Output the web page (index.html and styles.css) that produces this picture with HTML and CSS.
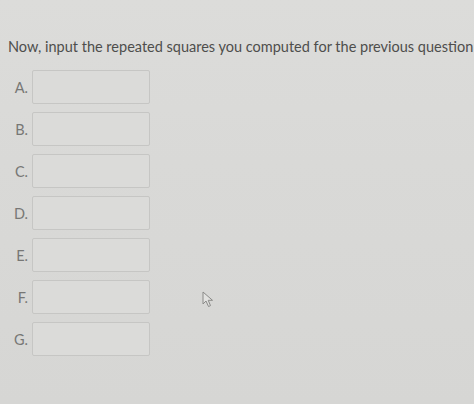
FILE: index.html
```html
<!DOCTYPE html>
<html>
<head>
<meta charset="utf-8">
<link rel="stylesheet" href="styles.css">
</head>
<body>
<div class="page">
  <p class="question">Now, input the repeated squares you computed for the previous question</p>
  <div class="answers">
    <div class="row"><span class="label">A.</span><div class="box"></div></div>
    <div class="row"><span class="label">B.</span><div class="box"></div></div>
    <div class="row"><span class="label">C.</span><div class="box"></div></div>
    <div class="row"><span class="label">D.</span><div class="box"></div></div>
    <div class="row"><span class="label">E.</span><div class="box"></div></div>
    <div class="row"><span class="label">F.</span><div class="box"></div></div>
    <div class="row"><span class="label">G.</span><div class="box"></div></div>
  </div>
  <svg class="cursor" width="12" height="17" viewBox="0 0 12 17">
    <path d="M1 1 L1 13 L4 10 L6.5 15.5 L8.5 14.6 L6.2 9.3 L10.5 9.3 Z" fill="#e2e2e0" stroke="#8a8a88" stroke-width="1" stroke-linejoin="round"/>
  </svg>
</div>
</body>
</html>
```
FILE: styles.css
```css
html, body {
  margin: 0;
  padding: 0;
}
body {
  background: #d8d8d6;
  width: 474px;
  height: 404px;
  overflow: hidden;
  font-family: Lato, "Open Sans", sans-serif;
}
.page {
  position: relative;
  width: 474px;
  height: 404px;
  background: linear-gradient(180deg, #dcdcda 0%, #d9d9d7 40%, #d6d6d4 100%);
}
.question {
  margin: 0;
  padding: 37px 0 0 8px;
  font-size: 14.5px;
  line-height: 20px;
  color: #4e4e4c;
  white-space: nowrap;
}
.answers {
  display: flex;
  flex-direction: column;
  gap: 8px;
  padding-top: 13px;
}
.row {
  display: flex;
  align-items: center;
}
.label {
  width: 28px;
  text-align: right;
  padding-right: 4px;
  font-size: 14.5px;
  color: #777775;
}
.box {
  width: 116px;
  height: 32px;
  border: 1px solid #c6c6c4;
  border-radius: 2px;
  background: #dbdbd9;
}
.cursor {
  position: absolute;
  left: 202px;
  top: 291px;
}
```
